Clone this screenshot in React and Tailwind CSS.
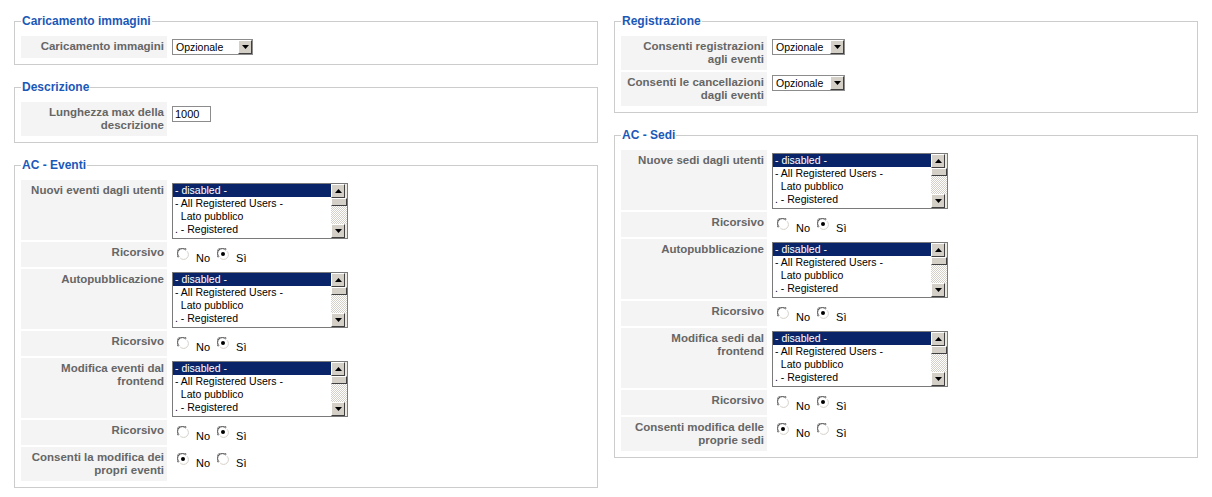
import React from 'react';

const font = { fontFamily: '"Liberation Sans", Arial, sans-serif' };

const Fieldset = ({ title, children, last }) => (
  <fieldset className={`border border-[#cccccc] px-[6px] pt-[8px] pb-[6px] ${last ? '' : 'mb-[15px]'}`}>
    <legend className="px-[1px] ml-0 text-[12px] leading-[14px] font-bold text-[#1b58b8]">{title}</legend>
    <div className="flex flex-col gap-[2px]">{children}</div>
  </fieldset>
);

const Row = ({ label, children, list }) => (
  <div className="flex items-stretch">
    <div className="w-[146px] shrink-0 bg-[#f4f4f4] text-right pr-[3px] pl-[4px] py-[4px] text-[11.5px] leading-[13px] font-bold text-[#666666]">
      {label}
    </div>
    <div className={`pl-[5px] ${list ? 'pt-[3px] pb-[1px]' : 'py-[3px]'}`}>{children}</div>
  </div>
);

const ArrowBtn = ({ dir }) => (
  <div className="w-[14px] h-[14px] shrink-0 bg-[#d4d0c8] border-t border-l border-t-white border-l-white border-r border-b border-r-[#404040] border-b-[#404040] flex items-center justify-center">
    <svg width="7" height="4" viewBox="0 0 7 4">
      {dir === 'down' ? <path d="M0 0h7L3.5 4z" fill="#000" /> : <path d="M0 4h7L3.5 0z" fill="#000" />}
    </svg>
  </div>
);

const SelectBox = ({ value, width = 'w-[81px]' }) => (
  <div className={`flex ${width} h-[16px] border border-[#8c8c8c] bg-white`}>
    <div className="flex-1 pl-[3px] text-[10.5px] leading-[14px] text-black">{value}</div>
    <ArrowBtn dir="down" />
  </div>
);

const ListBox = () => (
  <div className="flex w-[176px] h-[56px] border border-[#7a7a7a] bg-white">
    <div className="flex-1 text-[10.5px] leading-[13px] text-black">
      <div className="bg-[#0a246a] text-white pl-[2px]">- disabled -</div>
      <div className="pl-[2px]">- All Registered Users -</div>
      <div className="pl-[2px]">&nbsp;&nbsp;Lato pubblico</div>
      <div className="pl-[2px]">. - Registered</div>
    </div>
    <div className="w-[16px] flex flex-col bg-[#ece9e2]">
      <ArrowBtn dir="up" />
      <div className="h-[8px] bg-[#d4d0c8] border-t border-l border-t-white border-l-white border-r border-b border-r-[#404040] border-b-[#404040]" />
      <div className="flex-1 bg-[repeating-conic-gradient(#ffffff_0_25%,#d4d0c8_0_50%)] bg-[length:2px_2px]" />
      <ArrowBtn dir="down" />
    </div>
  </div>
);

const Radio = ({ checked }) => (
  <svg width="12" height="12" viewBox="0 0 12 12" className="shrink-0">
    <circle cx="6" cy="6" r="5.5" fill="#fff" />
    <path d="M1.2 9.5A5.5 5.5 0 0 1 9.5 1.2" stroke="#808080" strokeWidth="1" fill="none" />
    <path d="M2 8.8A4.5 4.5 0 0 1 8.8 2" stroke="#404040" strokeWidth="1" fill="none" />
    <path d="M10.8 2.5A5.5 5.5 0 0 1 2.5 10.8" stroke="#ffffff" strokeWidth="1" fill="none" />
    <path d="M10 3.2A4.5 4.5 0 0 1 3.2 10" stroke="#d4d0c8" strokeWidth="1" fill="none" />
    {checked && <circle cx="6" cy="6" r="2" fill="#000" />}
  </svg>
);

const YesNo = ({ yes }) => (
  <div className="flex items-end h-[19px] pl-[5px] pt-[4px] text-[11px] leading-[11px] text-black">
    <div className="flex items-start">
      <Radio checked={!yes} />
      <span className="ml-[7px] mt-[5px]">No</span>
    </div>
    <div className="flex items-start ml-[7px]">
      <Radio checked={yes} />
      <span className="ml-[7px] mt-[5px]">Sì</span>
    </div>
  </div>
);

const ListRow = ({ label }) => (
  <Row label={label} list>
    <ListBox />
  </Row>
);

export default function App() {
  return (
    <div className="bg-white w-[1212px] h-[497px] overflow-hidden" style={font}>
      <div className="flex gap-[16px] pl-[14px] pt-[14px]">
        <div className="w-[584px]">
          <Fieldset title="Caricamento immagini">
            <Row label="Caricamento immagini">
              <SelectBox value="Opzionale" />
            </Row>
          </Fieldset>
          <Fieldset title="Descrizione">
            <Row label="Lunghezza max della descrizione">
              <div className="w-[39px] h-[16px] mt-[1px] border border-[#8c8c8c] bg-white pl-[2px] text-[11px] leading-[14px] text-black">1000</div>
            </Row>
          </Fieldset>
          <Fieldset title="AC - Eventi" last>
            <ListRow label="Nuovi eventi dagli utenti" />
            <Row label="Ricorsivo"><YesNo yes /></Row>
            <ListRow label="Autopubblicazione" />
            <Row label="Ricorsivo"><YesNo yes /></Row>
            <ListRow label="Modifica eventi dal frontend" />
            <Row label="Ricorsivo"><YesNo yes /></Row>
            <Row label="Consenti la modifica dei propri eventi"><YesNo /></Row>
          </Fieldset>
        </div>
        <div className="w-[584px]">
          <Fieldset title="Registrazione">
            <Row label="Consenti registrazioni agli eventi">
              <SelectBox value="Opzionale" width="w-[73px]" />
            </Row>
            <Row label="Consenti le cancellazioni dagli eventi">
              <SelectBox value="Opzionale" width="w-[73px]" />
            </Row>
          </Fieldset>
          <Fieldset title="AC - Sedi" last>
            <ListRow label="Nuove sedi dagli utenti" />
            <Row label="Ricorsivo"><YesNo yes /></Row>
            <ListRow label="Autopubblicazione" />
            <Row label="Ricorsivo"><YesNo yes /></Row>
            <ListRow label="Modifica sedi dal frontend" />
            <Row label="Ricorsivo"><YesNo yes /></Row>
            <Row label="Consenti modifica delle proprie sedi"><YesNo /></Row>
          </Fieldset>
        </div>
      </div>
    </div>
  );
}
